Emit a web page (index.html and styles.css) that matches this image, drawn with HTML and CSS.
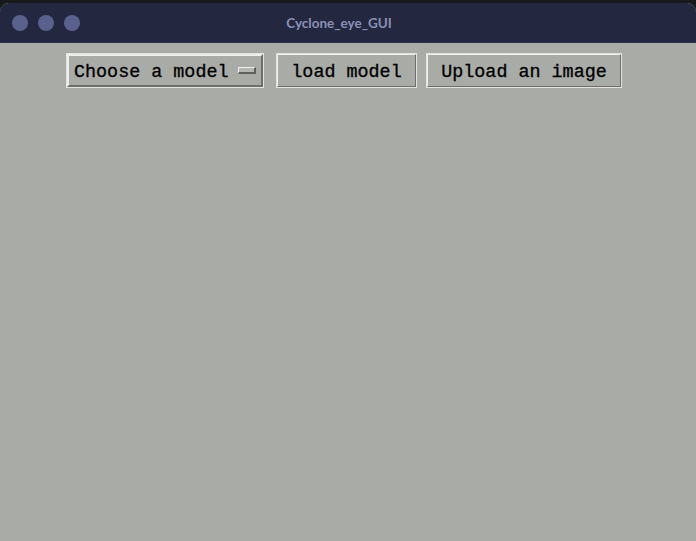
FILE: index.html
```html
<!DOCTYPE html>
<html>
<head>
<meta charset="utf-8">
<link rel="stylesheet" href="styles.css">
</head>
<body>
<div class="window">
  <div class="titlebar">
    <div class="dots">
      <span class="dot"></span><span class="dot"></span><span class="dot"></span>
    </div>
    <div class="title">Cyclone_eye_GUI</div>
  </div>
  <div class="content">
    <div class="toolbar">
      <div class="tk optmenu"><div class="relief relief2"><span class="label">Choose a model</span><span class="indicator"></span></div></div>
      <div class="tk btn-load"><div class="relief"><span class="label">load model</span></div></div>
      <div class="tk btn-upload"><div class="relief"><span class="label">Upload an image</span></div></div>
    </div>
  </div>
</div>
</body>
</html>
```
FILE: styles.css
```css
html, body {
  margin: 0;
  padding: 0;
  background: #18191c;
  width: 696px;
  height: 541px;
  overflow: hidden;
}
.window {
  margin-top: 3px;
  height: 538px;
  display: flex;
  flex-direction: column;
  background: #a9aba7;
  border-radius: 9px 9px 0 0;
  overflow: hidden;
}
.titlebar {
  height: 39px;
  flex: none;
  background: #232840;
  border-bottom: 1px solid #2d3248;
  position: relative;
  display: flex;
  align-items: center;
}
.dots {
  display: flex;
  gap: 10px;
  padding-left: 12px;
}
.dot {
  width: 16px;
  height: 16px;
  border-radius: 50%;
  background: #5b618d;
}
.title {
  position: absolute;
  left: 0;
  right: 0;
  top: 0;
  bottom: 0;
  display: flex;
  align-items: center;
  justify-content: center;
  font-family: "Lato", "Open Sans", sans-serif;
  font-weight: 700;
  font-size: 13.5px;
  color: #8a90b6;
  padding-right: 18px;
}
.content {
  flex: 1;
  background: #a9aba7;
}
.toolbar {
  display: flex;
  padding: 10px 0 0 66px;
}
.tk {
  border: 1px solid #e2e3e0;
  height: 33px;
  box-sizing: content-box;
  display: flex;
}
.relief {
  flex: 1;
  display: flex;
  align-items: center;
  justify-content: center;
  border-style: solid;
  border-width: 1px;
  border-color: #eeeeec #6e6f6c #6e6f6c #eeeeec;
  background: #a9aba7;
}
.relief2 {
  border-width: 2px;
  justify-content: space-between;
  padding: 0 5px 0 5px;
}
.label {
  font-family: "Liberation Mono", "DejaVu Sans Mono", monospace;
  font-weight: 400;
  -webkit-text-stroke: 0.3px #000;
  font-size: 18.4px;
  color: #000;
  line-height: 1;
  margin-top: 5px;
}
.optmenu {
  width: 196px;
}
.btn-load {
  width: 139px;
  margin-left: 12px;
}
.btn-upload {
  width: 194px;
  margin-left: 9px;
}
.indicator {
  width: 15px;
  height: 4px;
  border-style: solid;
  border-width: 1px 2px 2px 1px;
  border-color: #eeeeec #5f605d #5f605d #eeeeec;
  background: #b4b6b2;
  margin-right: 0;
}
```
